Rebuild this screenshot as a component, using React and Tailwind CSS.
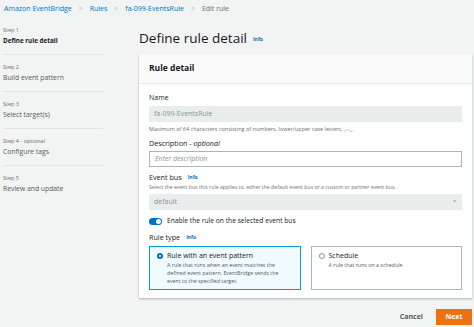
import React from "react";

const steps = [
  { step: "Step 1", title: "Define rule detail", active: true },
  { step: "Step 2", title: "Build event pattern" },
  { step: "Step 3", title: "Select target(s)" },
  { step: "Step 4 - optional", title: "Configure tags" },
  { step: "Step 5", title: "Review and update" },
];

function Info() {
  return <span className="ml-[6px] text-[5px] font-bold text-[#0073bb]">Info</span>;
}

export default function App() {
  return (
    <div
      className="w-[474px] h-[327px] overflow-hidden bg-[#f2f3f3] text-[#16191f]"
      style={{ fontFamily: "'Open Sans', 'Noto Sans', sans-serif" }}
    >
      <div className="h-[17px] flex items-center pl-[4px] pt-[1px] text-[7px] gap-[7px]">
        <span className="text-[#0073bb]">Amazon EventBridge</span>
        <span className="text-[#aab7b8]">&gt;</span>
        <span className="text-[#0073bb]">Rules</span>
        <span className="text-[#aab7b8]">&gt;</span>
        <span className="text-[#0073bb]">fa-099-EventsRule</span>
        <span className="text-[#aab7b8]">&gt;</span>
        <span className="text-[#687078]">Edit rule</span>
      </div>
      <div className="flex">
        <div className="w-[103px] pl-[3px] flex flex-col">
          {steps.map((s, i) => (
            <div
              key={s.step}
              className={`flex flex-col ${i === 0 ? "h-[38px] pt-[9px]" : "h-[37px] pt-[8px]"} ${i < 4 ? "border-b border-[#e1e4e5]" : ""}`}
            >
              <div className="text-[5.5px] leading-[9px] text-[#687078]">{s.step}</div>
              <div className={`leading-[12px] ${s.active ? "text-[6.3px] font-bold text-[#16191f]" : "text-[6.8px] text-[#545b64]"}`}>
                {s.title}
              </div>
            </div>
          ))}
        </div>
        <div className="flex-1 ml-[36px] mr-[2px]">
          <div className="h-[37px] flex items-end pb-[8px]">
            <span className="text-[13.5px] leading-[16px] text-[#16191f]">Define rule detail</span>
            <span className="ml-[6px] mb-[3px] text-[5px] font-bold text-[#0073bb]">Info</span>
          </div>
          <div className="bg-white shadow-[0_1px_2px_rgba(0,28,36,0.3)]">
            <div className="h-[30px] flex items-center px-[10px] bg-[#fafafa] border-b border-[#eaeded]">
              <span className="text-[8.5px] font-bold">Rule detail</span>
            </div>
            <div className="px-[10px] pt-[8px] pb-[8px] text-[7px]">
              <div className="leading-[11px] text-[7px]">Name</div>
              <div className="mt-[3px] h-[16px] bg-[#eaeded] flex items-center px-[5px] text-[7px] text-[#879596]">
                fa-099-EventsRule
              </div>
              <div className="mt-[3px] text-[5.5px] leading-[8px] text-[#687078]">
                Maximum of 64 characters consisting of numbers, lower/upper case letters, .,-,_.
              </div>
              <div className="mt-[5px] leading-[11px] text-[7.2px]">
                Description - <i>optional</i>
              </div>
              <div className="mt-[2px] h-[16px] border border-[#aab7b8] flex items-center px-[5px] text-[7px] italic text-[#879596]">
                Enter description
              </div>
              <div className="mt-[5px] flex items-center leading-[11px] text-[7.2px]">
                Event bus <Info />
              </div>
              <div className="text-[5.2px] leading-[8px] text-[#687078]">
                Select the event bus this rule applies to, either the default event bus or a custom or partner event bus.
              </div>
              <div className="mt-[3px] h-[16px] bg-[#eaeded] flex items-center justify-between px-[5px] text-[7px] text-[#879596]">
                <span>default</span>
                <span className="text-[5px] text-[#aab7b8]">▼</span>
              </div>
              <div className="mt-[5px] flex items-center gap-[5px] h-[12px]">
                <div className="w-[13px] h-[7px] rounded-full bg-[#0073bb] flex items-center justify-end pr-[1px]">
                  <div className="w-[5px] h-[5px] rounded-full bg-white" />
                </div>
                <span className="text-[6.7px]">Enable the rule on the selected event bus</span>
              </div>
              <div className="mt-[5px] flex items-center leading-[11px] text-[7.2px]">
                Rule type <Info />
              </div>
              <div className="mt-[3px] grid grid-cols-2 gap-[10px]">
                <div className="h-[44px] border border-[#00a1c9] bg-[#f1faff] px-[7px] pt-[4px] flex gap-[4px]">
                  <div className="mt-[2px] w-[6px] h-[6px] rounded-full border-[2px] border-[#0073bb] bg-white shrink-0" />
                  <div>
                    <div className="text-[7px] leading-[10px]">Rule with an event pattern</div>
                    <div className="text-[5.3px] leading-[8px] text-[#545b64]">
                      A rule that runs when an event matches the defined event pattern. EventBridge sends the event to the specified target.
                    </div>
                  </div>
                </div>
                <div className="h-[44px] border border-[#aab7b8] bg-white px-[7px] pt-[4px] flex gap-[4px]">
                  <div className="mt-[2px] w-[6px] h-[6px] rounded-full border border-[#879596] bg-white shrink-0" />
                  <div>
                    <div className="text-[7px] leading-[10px]">Schedule</div>
                    <div className="text-[5.3px] leading-[8px] text-[#545b64]">A rule that runs on a schedule</div>
                  </div>
                </div>
              </div>
            </div>
          </div>
          <div className="mt-[11px] flex items-center justify-end gap-[13px]">
            <span className="text-[7px] font-bold text-[#545b64]">Cancel</span>
            <div className="w-[36px] h-[16px] bg-[#ec7211] flex items-center justify-center text-[7px] font-bold text-white">
              Next
            </div>
          </div>
        </div>
      </div>
    </div>
  );
}
